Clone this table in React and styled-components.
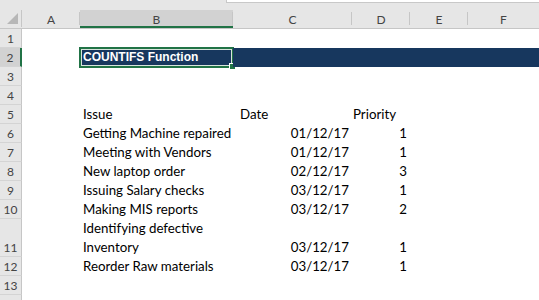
import React from 'react';
import styled, { createGlobalStyle } from 'styled-components';

const GlobalStyle = createGlobalStyle`
  html, body {
    margin: 0;
    padding: 0;
    background: #ffffff;
  }
  body {
    font-family: Lato, "Liberation Sans", sans-serif;
    overflow: hidden;
  }
`;

const COLS = '22px 58px 153px 119px 58px 58px 1fr';
const GREEN = '#217346';
const NAVY = '#17375e';

const Sheet = styled.div`
  width: 539px;
  height: 300px;
  display: flex;
  flex-direction: column;
  background: #ffffff;
  overflow: hidden;
`;

const TopStrip = styled.div`
  height: 10px;
  flex-shrink: 0;
  background: #e6e6e6;
  display: flex;
  justify-content: flex-end;
`;

const FormulaEdge = styled.div`
  width: 312px;
  height: 2px;
  background: #ffffff;
  border-bottom: 1px solid #c8c8c8;
  border-left: 1px solid #c8c8c8;
`;

const HeaderRow = styled.div`
  display: grid;
  grid-template-columns: ${COLS};
  height: 19px;
  flex-shrink: 0;
  box-sizing: border-box;
  background: #e6e6e6;
  border-bottom: 1px solid #c6c6c6;
`;

const Corner = styled.div`
  position: relative;
  border-right: 1px solid #c6c6c6;
  &::after {
    content: '';
    position: absolute;
    right: 3px;
    bottom: 3px;
    width: 0;
    height: 0;
    border-left: 11px solid transparent;
    border-bottom: 11px solid #b7b7b7;
  }
`;

const ColHead = styled.div`
  display: flex;
  align-items: center;
  justify-content: center;
  padding-top: 1px;
  font-size: 12px;
  color: #444444;
  background: ${(p) => (p.$active ? '#d2d2d2' : 'transparent')};
  box-shadow: ${(p) => (p.$active ? `inset 0 -2px 0 ${GREEN}` : 'none')};
  margin-bottom: ${(p) => (p.$active ? '-1px' : '0')};
  position: relative;
  &::after {
    content: '';
    position: absolute;
    right: 0;
    top: 2px;
    bottom: 2px;
    width: 1px;
    background: #c6c6c6;
    display: ${(p) => (p.$last ? 'none' : 'block')};
  }
`;

const Row = styled.div`
  display: grid;
  grid-template-columns: ${COLS};
  height: ${(p) => p.$h || 19}px;
  flex-shrink: 0;
`;

const RowHead = styled.div`
  display: flex;
  align-items: flex-end;
  justify-content: center;
  padding-bottom: 1px;
  box-sizing: border-box;
  font-size: 12px;
  color: #444444;
  background: ${(p) => (p.$active ? '#d2d2d2' : '#e6e6e6')};
  border-right: ${(p) => (p.$active ? `2px solid ${GREEN}` : '1px solid #c6c6c6')};
  border-bottom: 1px solid #d4d4d4;
`;

const Cell = styled.div`
  position: relative;
  display: flex;
  flex-direction: column;
  justify-content: flex-end;
  align-items: ${(p) => (p.$right ? 'flex-end' : 'flex-start')};
  padding: 0 ${(p) => (p.$right ? 3 : 0)}px 0 ${(p) => p.$indent ?? 3}px;
  font-size: 13.3px;
  line-height: 19px;
  color: #000000;
  white-space: nowrap;
  background: ${(p) => (p.$fill ? NAVY : 'transparent')};
  box-sizing: border-box;
`;

const TitleText = styled.span`
  color: #ffffff;
  font-weight: 700;
  font-family: "Liberation Sans", Arial, sans-serif;
  font-size: 12px;
`;

const Selection = styled.div`
  position: absolute;
  left: -1px;
  top: -1px;
  right: -1px;
  bottom: -1px;
  border: 2px solid ${GREEN};
  box-shadow: inset 0 0 0 1px #d8e4dc;
  pointer-events: none;
  &::after {
    content: '';
    position: absolute;
    right: -4px;
    bottom: -4px;
    width: 5px;
    height: 5px;
    background: ${GREEN};
    border: 1px solid #ffffff;
  }
`;

const columns = ['A', 'B', 'C', 'D', 'E', 'F'];

const issues = [
  { n: 6, issue: ['Getting Machine repaired'], date: '01/12/17', prio: 1 },
  { n: 7, issue: ['Meeting with Vendors'], date: '01/12/17', prio: 1 },
  { n: 8, issue: ['New laptop order'], date: '02/12/17', prio: 3 },
  { n: 9, issue: ['Issuing Salary checks'], date: '03/12/17', prio: 1 },
  { n: 10, issue: ['Making MIS reports'], date: '03/12/17', prio: 2 },
  { n: 11, issue: ['Identifying defective', 'Inventory'], date: '03/12/17', prio: 1, h: 38 },
  { n: 12, issue: ['Reorder Raw materials'], date: '03/12/17', prio: 1 },
];

function EmptyRow({ n, active, children }) {
  return (
    <Row>
      <RowHead $active={active}>{n}</RowHead>
      {children || columns.map((c) => <Cell key={c} />)}
    </Row>
  );
}

export default function App() {
  return (
    <>
      <GlobalStyle />
      <Sheet>
        <TopStrip>
          <FormulaEdge />
        </TopStrip>
        <HeaderRow>
          <Corner />
          {columns.map((c, i) => (
            <ColHead key={c} $active={c === 'B'} $last={i === columns.length - 1}>
              {c}
            </ColHead>
          ))}
          <div />
        </HeaderRow>

        <EmptyRow n={1} />
        <EmptyRow n={2} active>
          <Cell />
          <Cell $fill>
            <TitleText>COUNTIFS Function</TitleText>
            <Selection />
          </Cell>
          <Cell $fill />
          <Cell $fill />
          <Cell $fill />
          <Cell $fill />
          <Cell $fill />
        </EmptyRow>
        <EmptyRow n={3} />
        <EmptyRow n={4} />

        <Row>
          <RowHead>5</RowHead>
          <Cell />
          <Cell>Issue</Cell>
          <Cell $indent={7}>Date</Cell>
          <Cell $indent={1}>Priority</Cell>
          <Cell />
          <Cell />
        </Row>

        {issues.map((r) => (
          <Row key={r.n} $h={r.h}>
            <RowHead>{r.n}</RowHead>
            <Cell />
            <Cell>
              {r.issue.map((line) => (
                <span key={line}>{line}</span>
              ))}
            </Cell>
            <Cell $right>{r.date}</Cell>
            <Cell $right>{r.prio}</Cell>
            <Cell />
            <Cell />
          </Row>
        ))}

        <EmptyRow n={13} />
        {/* row 14 runs past the bottom edge, only its header strip shows */}
        <EmptyRow />
      </Sheet>
    </>
  );
}
